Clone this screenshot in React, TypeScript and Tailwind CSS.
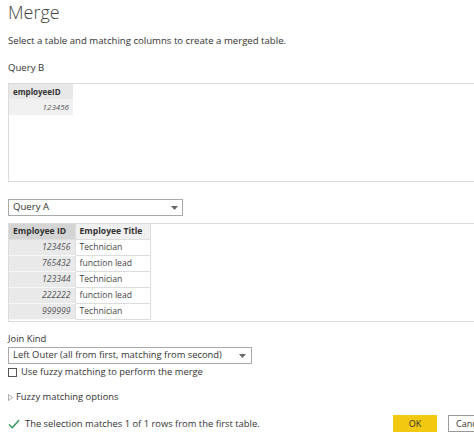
import React from 'react'

const rows = [
  { id: '123456', title: 'Technician' },
  { id: '765432', title: 'function lead' },
  { id: '123344', title: 'Technician' },
  { id: '222222', title: 'function lead' },
  { id: '999999', title: 'Technician' },
]

function Caret() {
  return (
    <svg width="7" height="4" viewBox="0 0 7 4" className="shrink-0">
      <path d="M0 0 L7 0 L3.5 4 Z" fill="#666" />
    </svg>
  )
}

export default function App() {
  return (
    <div
      className="w-[474px] h-[441px] overflow-hidden bg-white text-[#333]"
      style={{ fontFamily: '"Open Sans", "Noto Sans", sans-serif' }}
    >
      <div className="w-[560px] pl-2">
        {/* Header */}
        <h1 className="pt-[1px] text-[18px] font-light leading-[22px] text-[#444]">Merge</h1>
        <p className="mt-[11px] text-[9.6px] leading-[14px]">
          Select a table and matching columns to create a merged table.
        </p>

        {/* Query B */}
        <p className="mt-[13px] text-[9.6px] leading-[14px]">Query B</p>
        <div className="mt-[8px] h-[99px] border border-[#dcdcdc]">
          <table className="border-collapse text-[8px]">
            <thead>
              <tr className="h-[15px]">
                <th className="w-[64px] bg-[#e8e8e8] px-1 text-left font-bold">employeeID</th>
              </tr>
            </thead>
            <tbody>
              <tr className="h-[16px]">
                <td className="bg-[#f0f0f0] px-1 text-right italic text-[#555]">123456</td>
              </tr>
            </tbody>
          </table>
        </div>

        {/* Query A select */}
        <div className="mt-[17px] flex h-[17px] w-[175px] items-center justify-between border border-[#aaa] px-1 text-[9.6px]">
          <span>Query A</span>
          <Caret />
        </div>

        <div className="mt-[7px] h-[99px] border-t border-b border-l border-[#dcdcdc]">
          <table className="border-collapse text-[8.6px]">
            <thead>
              <tr className="h-[15px]">
                <th className="w-[66px] bg-[#d4d4d4] px-1 text-left font-bold border-b border-[#ddd]">Employee ID</th>
                <th className="w-[75px] bg-[#f0f0f0] px-1 text-left font-bold border border-t-0 border-[#ddd]">Employee Title</th>
              </tr>
            </thead>
            <tbody>
              {rows.map((r) => (
                <tr key={r.id} className="h-[16px]">
                  <td className="bg-[#e9e9e9] px-1 text-right italic text-[#555] border-b border-[#f8f8f8]">{r.id}</td>
                  <td className="px-1 text-[#444] border border-t-0 border-[#ddd]">{r.title}</td>
                </tr>
              ))}
            </tbody>
          </table>
        </div>

        {/* Join Kind */}
        <p className="mt-[10px] text-[9.4px] leading-[14px]">Join Kind</p>
        <div className="mt-[1px] flex h-[17px] w-[244px] items-center justify-between border border-[#aaa] pl-1 pr-[5px] text-[9.4px]">
          <span>Left Outer (all from first, matching from second)</span>
          <Caret />
        </div>
        <label className="mt-[1px] flex items-center gap-[4px] text-[9.4px] leading-[14px]">
          <span className="h-[9px] w-[9px] border border-[#555] bg-white" />
          Use fuzzy matching to perform the merge
        </label>

        <div className="mt-[11px] flex items-center gap-[3px] text-[9.4px] leading-[14px]">
          <svg width="5" height="7" viewBox="0 0 5 7">
            <path d="M0.5 0.5 L4.5 3.5 L0.5 6.5 Z" fill="none" stroke="#999" strokeWidth="0.8" />
          </svg>
          <span>Fuzzy matching options</span>
        </div>

        {/* Footer */}
        <div className="mt-[11px] flex items-center">
          <div className="flex w-[385px] items-center">
            <svg width="12" height="10" viewBox="0 0 12 10" className="shrink-0">
              <path d="M1 5.5 L4.3 8.7 L11 1.2" fill="none" stroke="#2e9a5a" strokeWidth="1.5" />
            </svg>
            <span className="ml-[5px] text-[9.4px] leading-[14px]">
              The selection matches 1 of 1 rows from the first table.
            </span>
          </div>
          <button className="h-[17px] w-[44px] bg-[#f2c811] text-[9px] text-[#333]">OK</button>
          <button className="ml-[11px] h-[17px] w-[44px] border border-[#999] bg-white text-[9px] text-[#333]">
            Cancel
          </button>
        </div>
      </div>
    </div>
  )
}
